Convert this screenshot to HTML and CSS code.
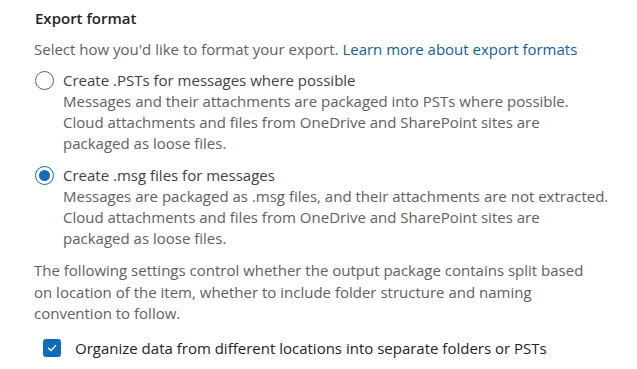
FILE: index.html
```html
<!DOCTYPE html>
<html>
<head>
<meta charset="utf-8">
<link rel="stylesheet" href="styles.css">
</head>
<body>
<div class="panel">
  <h2 class="title">Export format</h2>
  <p class="intro">Select how you'd like to format your export. <a class="link" href="#">Learn more about export formats</a></p>
  <div class="options">
    <div class="option">
      <span class="radio"></span>
      <div class="option-text">
        <div class="option-label">Create .PSTs for messages where possible</div>
        <div class="option-desc">Messages and their attachments are packaged into PSTs where possible. Cloud attachments and files from OneDrive and SharePoint sites are packaged as loose files.</div>
      </div>
    </div>
    <div class="option">
      <span class="radio checked"></span>
      <div class="option-text">
        <div class="option-label">Create .msg files for messages</div>
        <div class="option-desc">Messages are packaged as .msg files, and their attachments are not extracted. Cloud attachments and files from OneDrive and SharePoint sites are packaged as loose files.</div>
      </div>
    </div>
  </div>
  <p class="settings">The following settings control whether the output package contains split based on location of the item, whether to include folder structure and naming convention to follow.</p>
  <div class="check-row">
    <span class="checkbox">
      <svg width="12" height="12" viewBox="0 0 12 12"><path d="M2.5 6.3 L5 8.6 L9.6 3.6" fill="none" stroke="#fff" stroke-width="1.4" stroke-linecap="round" stroke-linejoin="round"/></svg>
    </span>
    <span class="check-label">Organize data from different locations into separate folders or PSTs</span>
  </div>
</div>
</body>
</html>
```

FILE: styles.css
```css
html, body {
  margin: 0;
  padding: 0;
  background: #ffffff;
}
body {
  font-family: "Open Sans", "Noto Sans", sans-serif;
  font-size: 15px;
  color: #323130;
}
.panel {
  padding: 8px 0 0 35px;
  width: 590px;
}
.title {
  margin: 0;
  font-size: 15px;
  font-weight: 600;
  line-height: 20px;
  color: #242424;
}
.intro {
  margin: 11px 0 0 -1px;
  line-height: 20px;
  color: #616161;
}
.link {
  color: #115ea3;
  text-decoration: none;
}
.options {
  margin-top: 11px;
  display: flex;
  flex-direction: column;
  gap: 11px;
}
.option {
  display: flex;
  gap: 9px;
  align-items: flex-start;
}
.radio {
  flex: none;
  width: 17px;
  height: 17px;
  border: 1px solid #616161;
  border-radius: 50%;
  margin-top: 1px;
  box-sizing: content-box;
  display: flex;
  align-items: center;
  justify-content: center;
}
.radio.checked {
  border-color: #0f6cbd;
}
.radio.checked::after {
  content: "";
  width: 11px;
  height: 11px;
  border-radius: 50%;
  background: #0f6cbd;
}
.option-text {
  width: 546px;
}
.option-label {
  line-height: 21px;
  color: #424242;
}
.option-desc {
  line-height: 21px;
  color: #616161;
}
.settings {
  margin: 11px 0 0 -1px;
  width: 556px;
  line-height: 21.5px;
  color: #616161;
}
.check-row {
  margin: 13px 0 0 8px;
  display: flex;
  align-items: center;
  gap: 14px;
}
.checkbox {
  flex: none;
  width: 18px;
  height: 18px;
  border-radius: 3px;
  background: #0f6cbd;
  display: flex;
  align-items: center;
  justify-content: center;
}
.check-label {
  color: #242424;
  line-height: 20px;
}
```
